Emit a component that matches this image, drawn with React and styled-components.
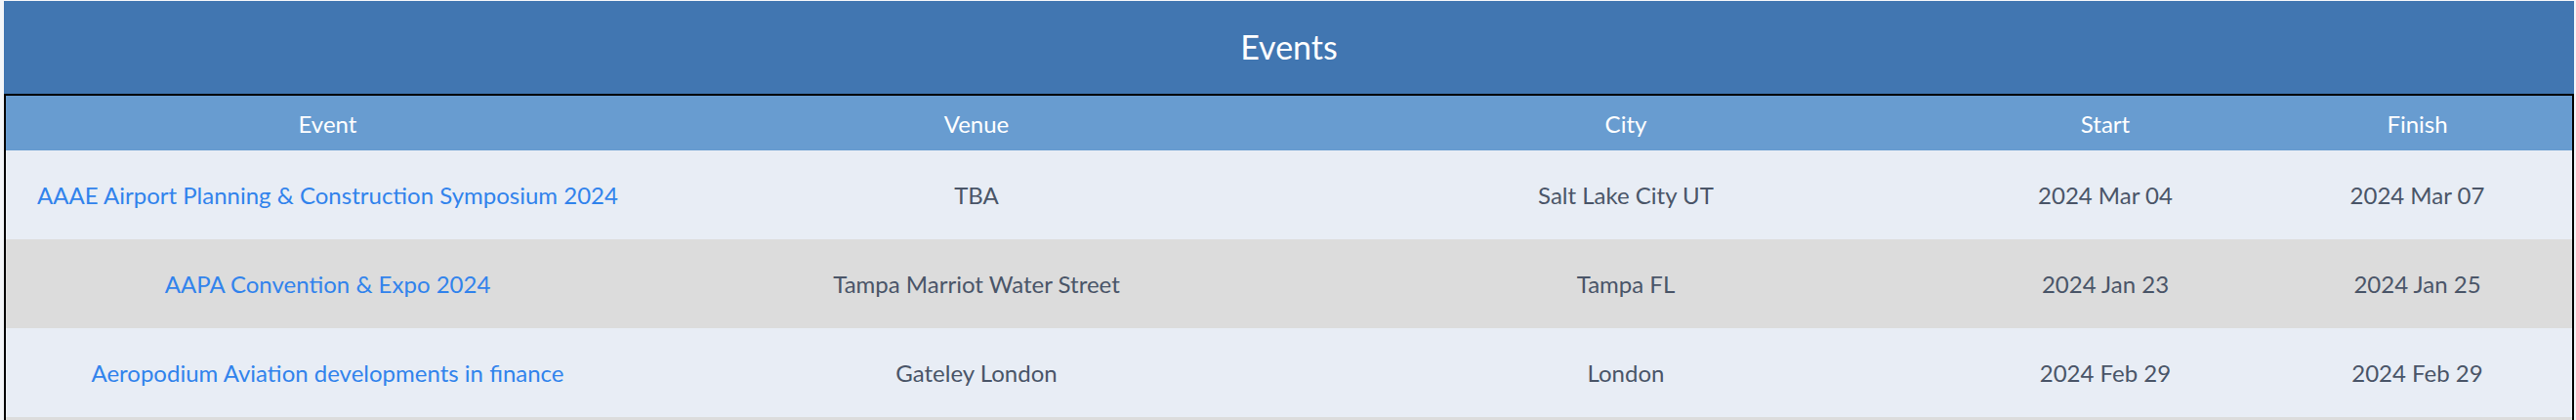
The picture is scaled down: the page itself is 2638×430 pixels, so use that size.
import React from "react";
import styled, { createGlobalStyle } from "styled-components";

const GlobalStyle = createGlobalStyle`
    html, body {
        margin: 0;
        padding: 0;
        background: #f4f6f9;
        font-family: Lato, "Open Sans", sans-serif;
    }
`

const Page = styled.div`
    padding: 1px 2px 0 4px;
    height: 430px;
    box-sizing: border-box;
    overflow: hidden;
`

const TitleBar = styled.div`
    height: 95px;
    background-color: #4176b1;
    color: #ffffff;
    display: flex;
    align-items: center;
    justify-content: center;
    font-size: 34px;
    font-weight: 400;
    padding-bottom: 2px;
    box-sizing: border-box;
`

const Table = styled.table`
    width: 100%;
    border: 2px solid #000000;
    border-collapse: collapse;
    table-layout: fixed;
    font-size: 24px;
`

const HeadCell = styled.th`
    height: 56px;
    padding: 0;
    background-color: #689cd0;
    color: #ffffff;
    font-weight: 400;
    text-align: center;
`

const Row = styled.tr`
    background-color: ${props => props.$alt ? '#dcdcdc' : '#e8edf5'};
`

const Cell = styled.td`
    height: 91px;
    padding: 0 8px;
    text-align: center;
    color: #4a5568;
`

const EventLink = styled.a`
    color: #3183ec;
    text-decoration: none;
`

const columns = [
    { label: 'Event', width: 660 },
    { label: 'Venue', width: 670 },
    { label: 'City', width: 660 },
    { label: 'Start', width: 322 },
    { label: 'Finish' },
]

const events = [
    { name: 'AAAE Airport Planning & Construction Symposium 2024', venue: 'TBA', city: 'Salt Lake City UT', start: '2024 Mar 04', finish: '2024 Mar 07' },
    { name: 'AAPA Convention & Expo 2024', venue: 'Tampa Marriot Water Street', city: 'Tampa FL', start: '2024 Jan 23', finish: '2024 Jan 25' },
    { name: 'Aeropodium Aviation developments in finance', venue: 'Gateley London', city: 'London', start: '2024 Feb 29', finish: '2024 Feb 29' },
    { name: '', venue: '', city: '', start: '', finish: '' },
]

export default function App() {
    return (
        <>
            <GlobalStyle />
            <Page>
                <TitleBar>Events</TitleBar>
                <Table>
                    <colgroup>
                        {columns.map((col, index) => (
                            <col key={index} style={col.width ? { width: col.width } : undefined} />
                        ))}
                    </colgroup>
                    <thead>
                        <tr>
                            {columns.map((col, index) => (
                                <HeadCell key={index}>{col.label}</HeadCell>
                            ))}
                        </tr>
                    </thead>
                    <tbody>
                        {events.map((event, index) => (
                            <Row key={index} $alt={index % 2 === 1}>
                                <Cell>{event.name && <EventLink href="#">{event.name}</EventLink>}</Cell>
                                <Cell>{event.venue}</Cell>
                                <Cell>{event.city}</Cell>
                                <Cell>{event.start}</Cell>
                                <Cell>{event.finish}</Cell>
                            </Row>
                        ))}
                    </tbody>
                </Table>
            </Page>
        </>
    )
}
